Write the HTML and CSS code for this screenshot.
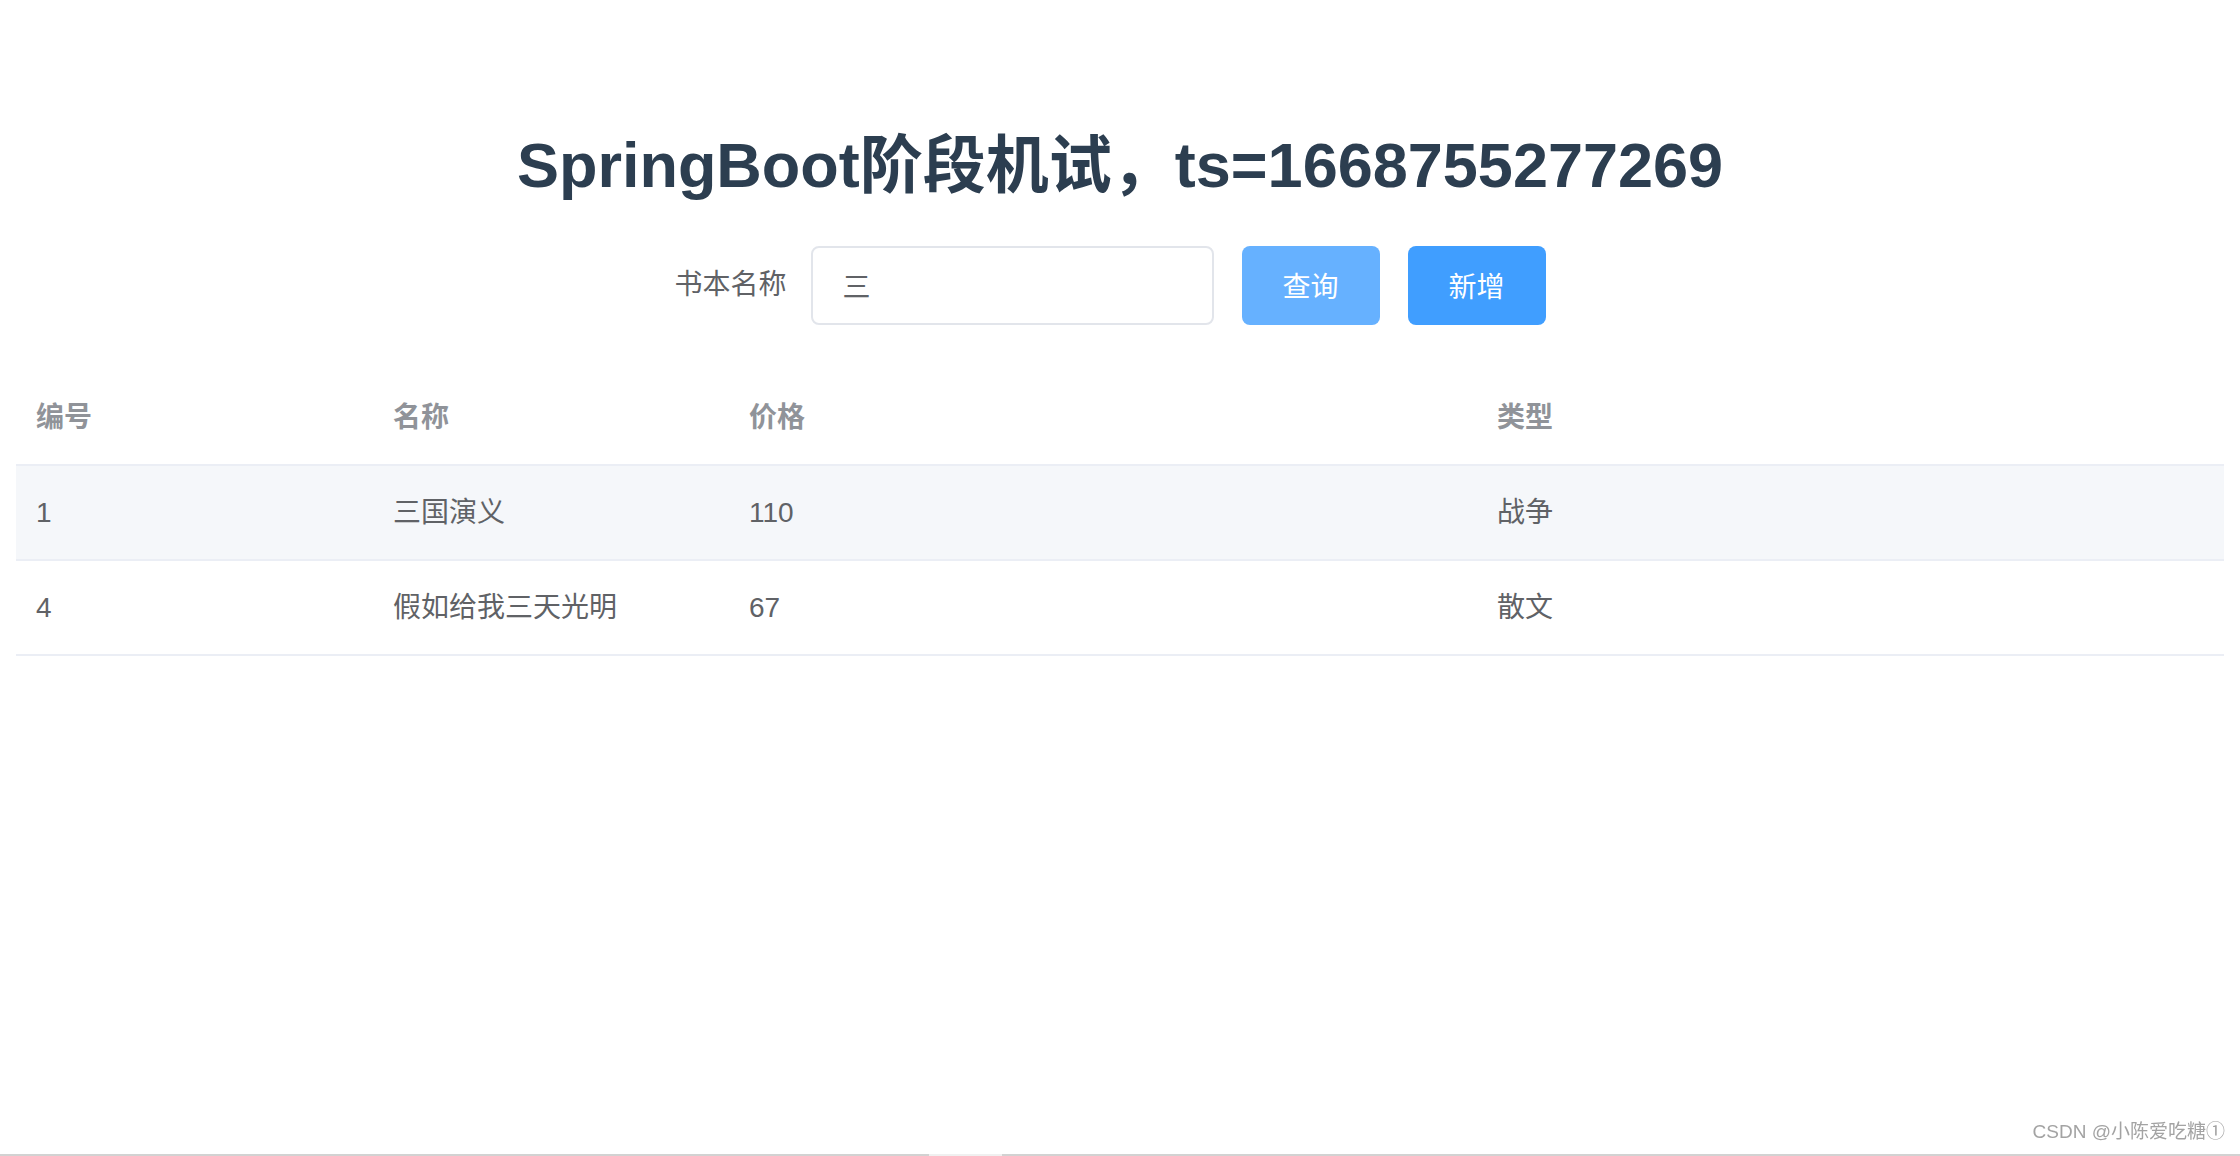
FILE: index.html
```html
<!DOCTYPE html>
<html lang="zh-CN">
<head>
  <meta charset="UTF-8">
  <title>SpringBoot阶段机试</title>
  <link rel="stylesheet" href="styles.css">
</head>
<body>
  <div id="app">
    <h1 class="title">SpringBoot阶段机试，ts=1668755277269</h1>

    <form class="search-form" onsubmit="return false">
      <div class="form-item">
        <label class="form-label">书本名称</label>
        <input class="form-input" type="text" value="三">
      </div>
      <button class="btn btn-search" type="button">查询</button>
      <button class="btn btn-add" type="button">新增</button>
    </form>

    <table class="book-table">
      <colgroup>
        <col class="col-id">
        <col class="col-name">
        <col class="col-price">
        <col class="col-type">
      </colgroup>
      <thead>
        <tr>
          <th>编号</th>
          <th>名称</th>
          <th>价格</th>
          <th>类型</th>
        </tr>
      </thead>
      <tbody>
        <tr class="hover-row">
          <td>1</td>
          <td>三国演义</td>
          <td>110</td>
          <td>战争</td>
        </tr>
        <tr>
          <td>4</td>
          <td>假如给我三天光明</td>
          <td>67</td>
          <td>散文</td>
        </tr>
      </tbody>
    </table>
  </div>

  <div class="watermark">CSDN @小陈爱吃糖①</div>
  <div class="bottom-bar"><span class="bar-thumb"></span></div>
</body>
</html>
```

FILE: styles.css
```css
body {
  margin: 0;
  padding: 0 16px;
  background-color: #fff;
  font-family: "Liberation Sans", Arial, "Noto Sans CJK SC", sans-serif;
}

#app {
  text-align: center;
  color: #2c3e50;
}

.title {
  margin: 128px 0 43px;
  font-size: 63px;
  line-height: 74px;
  font-weight: bold;
}

/* search form */
.search-form {
  display: flex;
  justify-content: center;
  align-items: center;
  gap: 28px;
  margin-bottom: 46px;
}

.form-item {
  display: flex;
  align-items: center;
}

.form-label {
  padding-right: 24px;
  font-size: 28px;
  line-height: 80px;
  color: #606266;
}

.form-input {
  box-sizing: border-box;
  width: 403px;
  height: 79px;
  padding: 0 30px;
  border: 2px solid #e2e5eb;
  border-radius: 8px;
  font-family: inherit;
  font-size: 28px;
  color: #606266;
  outline: none;
}

.btn {
  box-sizing: border-box;
  width: 138px;
  height: 79px;
  padding: 0;
  border: none;
  border-radius: 8px;
  font-family: inherit;
  font-size: 28px;
  color: #fff;
  cursor: pointer;
}

.btn-search {
  background-color: #66b1ff;
}

.btn-add {
  background-color: #409eff;
  margin-right: 20px;
}

/* table */
.book-table {
  width: 100%;
  table-layout: fixed;
  border-collapse: collapse;
  text-align: left;
  font-size: 28px;
  color: #606266;
}

.col-id { width: 357px; }
.col-name { width: 356px; }
.col-price { width: 748px; }
.col-type { width: 747px; }

.book-table th,
.book-table td {
  padding: 24px 20px;
  line-height: 45px;
  border-bottom: 2px solid #ebeef5;
}

.book-table th {
  color: #909399;
  font-weight: bold;
}

.book-table .hover-row td {
  background-color: #f5f7fa;
}

.watermark {
  position: fixed;
  right: 15px;
  bottom: 13px;
  font-size: 19px;
  color: #a3a3a3;
}

.bottom-bar {
  position: fixed;
  left: 0;
  right: 0;
  bottom: 0;
  height: 2px;
  background-color: #d2d2d2;
}

.bar-thumb {
  position: absolute;
  left: 929px;
  width: 73px;
  height: 2px;
  background-color: #f0f0f0;
}
```
